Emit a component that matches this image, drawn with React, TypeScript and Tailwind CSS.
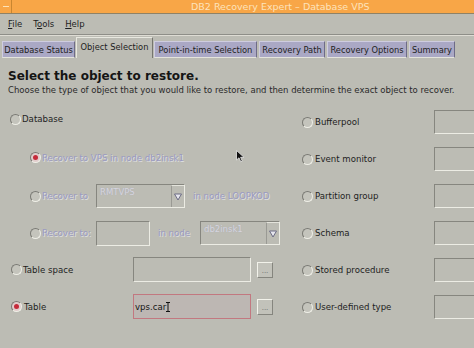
import React from "react";

const F = { fontFamily: '"DejaVu Sans", "Liberation Sans", sans-serif' };

function Radio({ checked }: { checked?: boolean }) {
  return (
    <span
      className={
        "relative inline-block w-[11px] h-[11px] shrink-0 rounded-full border border-t-[#7a7a74] border-l-[#7a7a74] border-b-[#eeeee6] border-r-[#eeeee6] " +
        (checked ? "bg-[#e2cccc]" : "bg-[#c4c4bc]")
      }
    >
      {checked && (
        <span className="absolute left-[2px] top-[2px] w-[5px] h-[5px] rounded-full bg-[#c52a3a]" />
      )}
    </span>
  );
}

function Field({ w, h = 25, children, red }: { w: number; h?: number; children?: React.ReactNode; red?: boolean }) {
  return (
    <div
      className={
        "flex items-center shrink-0 border " +
        (red
          ? "border-[#c27880] bg-[#bdb7b3]"
          : "border-t-[#86867f] border-l-[#86867f] border-b-[#ecece4] border-r-[#ecece4] bg-[#bcbcb4]")
      }
      style={{ width: w, height: h }}
    >
      {children}
    </div>
  );
}

function Combo({ w, text }: { w: number; text: string }) {
  return (
    <div
      className="flex shrink-0 h-[24px] border border-t-[#86867f] border-l-[#86867f] border-b-[#ecece4] border-r-[#ecece4] bg-[#bcbcb4]"
      style={{ width: w }}
    >
      <div className="flex-1 pl-[3px] pt-[2px] text-[8.5px] leading-[11px] text-[#d6d6de] [text-shadow:0_0_1px_#a8a8b8]">
        {text}
      </div>
      <div className="w-[13px] h-full flex items-center justify-center border-l border-l-[#9a9a94] border-t border-t-[#e4e4dc]">
        <svg width="8" height="8" viewBox="0 0 8 8">
          <path d="M0.5 1 L7.5 1 L4 7 Z" fill="#e6e6ee" stroke="#6c6c84" strokeWidth="1" />
        </svg>
      </div>
    </div>
  );
}

function DotsButton() {
  return (
    <div className="w-[16px] h-[16px] shrink-0 border border-t-[#f2f2ea] border-l-[#f2f2ea] border-b-[#85857e] border-r-[#85857e] bg-[#c2c2ba] flex items-center justify-center text-[7px] leading-[7px] text-[#6a6a6a] pt-[3px]">
      ...
    </div>
  );
}

const dis = "text-[#9a9ac2] [text-shadow:1px_1px_0_#dedee0]";

export default function App() {
  const tabs = [
    { t: "Database Status", w: 73, ml: 2 },
    { t: "Object Selection", w: 77, ml: 1, sel: true },
    { t: "Point-in-time Selection", w: 103, ml: 1 },
    { t: "Recovery Path", w: 66, ml: 2 },
    { t: "Recovery Options", w: 80, ml: 2 },
    { t: "Summary", w: 46, ml: 2 },
  ];
  const right = [
    { t: "Bufferpool", h: 38 },
    { t: "Event monitor", h: 36 },
    { t: "Partition group", h: 38 },
    { t: "Schema", h: 36 },
    { t: "Stored procedure", h: 38 },
    { t: "User-defined type", h: 36 },
  ];
  return (
    <div className="relative w-[474px] h-[348px] overflow-hidden bg-[#bcbcb4] text-[#1e1e1e]" style={F}>
      {/* title bar */}
      <div className="flex h-[14px] bg-[#f8a647] border-b border-b-[#8f8266]">
        <div className="w-[12px] h-full border-r border-r-[#c98630] flex items-center justify-center">
          <div className="w-[6px] h-[1px] bg-[#fde2b8]" />
        </div>
        <div className="pl-[179px] text-[9.5px] leading-[13px] text-[#fde3bc]">
          DB2 Recovery Expert – Database VPS
        </div>
      </div>
      {/* menu bar */}
      <div className="flex items-center h-[20px] pl-[8px] gap-[11px] text-[8.5px] leading-[10px]">
        <span><span className="underline">F</span>ile</span>
        <span>T<span className="underline">o</span>ols</span>
        <span><span className="underline">H</span>elp</span>
      </div>
      <div className="h-[1px] bg-[#8e8e88]" />
      <div className="h-[1px] bg-[#dedcd4]" />
      {/* tabs */}
      <div className="flex items-end h-[22px]">
        {tabs.map((tb) =>
          tb.sel ? (
            <div
              key={tb.t}
              className="h-[21px] flex items-center justify-center text-[8.3px] leading-[10px] bg-[#bcbcb4] border-t border-l border-t-[#e8e8e0] border-l-[#e8e8e0] border-r border-r-[#75756f] pb-[3px]"
              style={{ width: tb.w, marginLeft: tb.ml }}
            >
              {tb.t}
            </div>
          ) : (
            <div
              key={tb.t}
              className="h-[17px] flex items-center justify-center text-[8.3px] leading-[10px] bg-[#aaa8c5] border-t border-l border-t-[#cfcde0] border-l-[#cfcde0] border-r border-r-[#6e6c88] border-b border-b-[#e4e4dc]"
              style={{ width: tb.w, marginLeft: tb.ml }}
            >
              {tb.t}
            </div>
          )
        )}
      </div>
      {/* content */}
      <div className="pl-[8px] pt-[11px]">
        <div className="text-[12px] leading-[14px] font-bold text-[#151515]">Select the object to restore.</div>
        <div className="text-[8.5px] leading-[10px] mt-[2px] text-[#2a2a2a] whitespace-nowrap">
          Choose the type of object that you would like to restore, and then determine the exact object to recover.
        </div>
      </div>
      {/* form */}
      <div className="flex mt-[5px] text-[8.6px] leading-[10px]">
        <div className="w-[300px] shrink-0 flex flex-col">
          <div className="h-[38px] flex items-center pl-[10px]">
            <Radio />
            <span className="ml-[1px]">Database</span>
          </div>
          <div className="h-[39px] flex items-center pl-[30px]">
            <Radio checked />
            <span className={"ml-[1px] " + dis}>Recover to VPS in node db2insk1</span>
          </div>
          <div className="h-[38px] flex items-center pl-[30px]">
            <div className="w-[66px] flex items-center">
              <Radio />
              <span className={"ml-[1px] " + dis}>Recover to</span>
            </div>
            <Combo w={89} text="RMTVPS" />
            <span className={"ml-[8px] " + dis}>in node LOOPKOD</span>
          </div>
          <div className="h-[36px] flex items-center pl-[30px]">
            <div className="w-[66px] flex items-center">
              <Radio />
              <span className={"ml-[1px] " + dis}>Recover to:</span>
            </div>
            <Field w={54} />
            <span className={"ml-[8px] w-[42px] " + dis}>in node</span>
            <Combo w={80} text="db2insk1" />
          </div>
          <div className="h-[37px] flex items-center pl-[11px]">
            <div className="w-[122px] flex items-center">
              <Radio />
              <span className="ml-[1px]">Table space</span>
            </div>
            <Field w={118} />
            <div className="ml-[6px]">
              <DotsButton />
            </div>
          </div>
          <div className="h-[37px] flex items-center pl-[11px]">
            <div className="w-[122px] flex items-center">
              <Radio checked />
              <span className="ml-[2px]">Table</span>
            </div>
            <Field w={118} red>
              <span className="text-[8.6px] leading-[10px] pl-[1px] text-[#151515]">vps.car</span>
              <svg width="4" height="10" viewBox="0 0 4 10" className="ml-[0px]">
                <path d="M0 0.5 H4 M2 0.5 V9.5 M0 9.5 H4" stroke="#111" strokeWidth="1" fill="none" />
              </svg>
            </Field>
            <div className="ml-[6px]">
              <DotsButton />
            </div>
          </div>
        </div>
        <div className="flex flex-col mt-[3px] pl-[2px] shrink-0">
          {right.map((r) => (
            <div key={r.t} className="flex items-center" style={{ height: r.h }}>
              <div className="w-[132px] flex items-center">
                <Radio />
                <span className="ml-[2px]">{r.t}</span>
              </div>
              <Field w={60} h={24} />
            </div>
          ))}
        </div>
      </div>
      {/* mouse pointer */}
      <svg className="absolute left-[236px] top-[150px]" width="9" height="13" viewBox="0 0 9 13">
        <path d="M0.5 0.5 L0.5 10 L3 7.8 L4.8 11.8 L6.3 11.1 L4.6 7.3 L8 7.3 Z" fill="#111" stroke="#e8e8e8" strokeWidth="0.8" />
      </svg>
    </div>
  );
}
